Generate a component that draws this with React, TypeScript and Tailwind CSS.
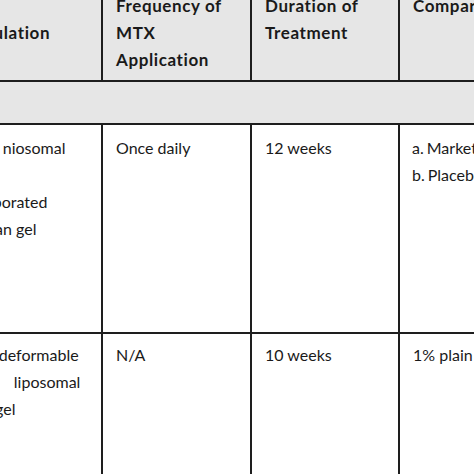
import React from "react";

const font = { fontFamily: "Lato, 'Open Sans', sans-serif" };

export default function App() {
  return (
    <div className="w-[474px] h-[474px] overflow-hidden bg-white text-[#1a1a1a]" style={font}>
      <div className="-ml-[60px] -mt-[18px] w-[580px] grid grid-cols-[161px_147px_146px_160px] grid-rows-[98px_41px_207px_186px] gap-[2px] bg-[#1e1e1e]">
        <div className="bg-[#e6e6e6] pl-[12px] pr-2 pt-[2px] flex items-center text-[17px] leading-[27px] font-bold tracking-[0.6px] whitespace-nowrap">
          Formulation
        </div>
        <div className="bg-[#e6e6e6] pl-[13px] pr-2 pt-[10px] text-[17px] leading-[27px] font-bold tracking-[0.6px] whitespace-nowrap">
          Frequency of<br />MTX<br />Application
        </div>
        <div className="bg-[#e6e6e6] pl-[13px] pr-2 pt-[10px] text-[17px] leading-[27px] font-bold tracking-[0.6px] whitespace-nowrap">
          Duration of<br />Treatment
        </div>
        <div className="bg-[#e6e6e6] pl-[13px] pr-2 pt-[10px] text-[17px] leading-[27px] font-bold tracking-[0.6px] whitespace-nowrap">
          Comparator
        </div>

        <div className="col-span-4 bg-[#e6e6e6]"></div>

        <div className="bg-white pl-[20px] pt-[9px] text-[16px] leading-[27px] whitespace-nowrap">
          <div className="-ml-[4px]"><span className="mr-[12px]">MTX</span>niosomal</div>
          <div>gel</div>
          <div className="-ml-[3px]">Incorporated</div>
          <div className="-ml-[7px]">chitosan gel</div>
        </div>
        <div className="bg-white pl-[13px] pt-[9px] text-[16px] leading-[27px]">Once daily</div>
        <div className="bg-white pl-[13px] pt-[9px] text-[16px] leading-[27px]">12 weeks</div>
        <div className="bg-white pl-[12px] pt-[9px] text-[16px] leading-[27px] whitespace-nowrap">
          <div className="flex gap-[3px]"><span>a.</span><span>Marketed gel</span></div>
          <div className="flex gap-[3px]"><span>b.</span><span>Placebo gel</span></div>
        </div>

        <div className="bg-white pl-[20px] pt-[7px] text-[16px] leading-[27px] whitespace-nowrap">
          <div>MTX deformable</div>
          <div className="ml-[14px]"><span className="mr-[14px]">and</span>liposomal</div>
          <div className="ml-[35px]">gel</div>
        </div>
        <div className="bg-white pl-[13px] pt-[7px] text-[16px] leading-[27px]">N/A</div>
        <div className="bg-white pl-[13px] pt-[7px] text-[16px] leading-[27px]">10 weeks</div>
        <div className="bg-white pl-[13px] pt-[7px] text-[16px] leading-[27px] whitespace-nowrap">1% plain MTX gel</div>
      </div>
    </div>
  );
}
